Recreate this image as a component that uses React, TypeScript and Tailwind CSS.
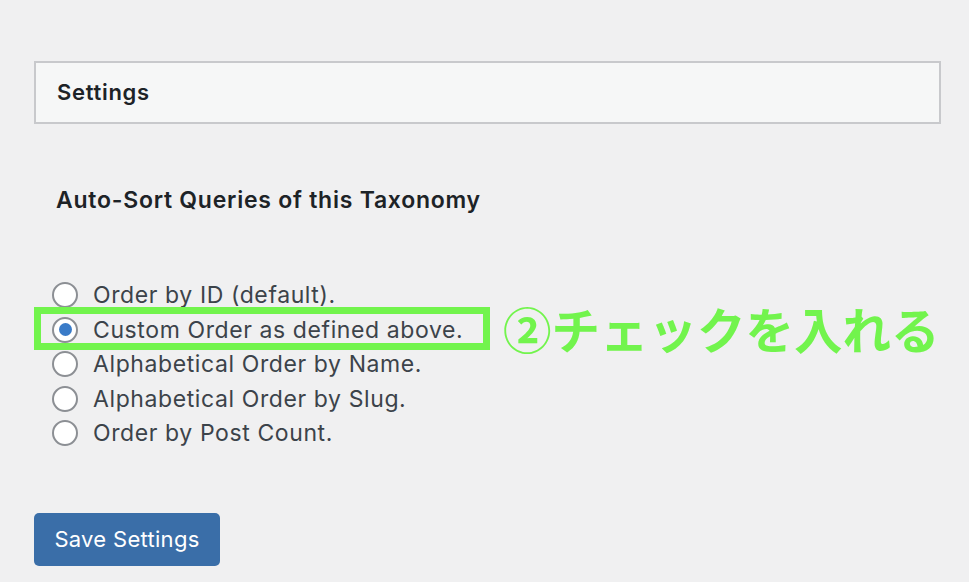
const options = [
  "Order by ID (default).",
  "Custom Order as defined above.",
  "Alphabetical Order by Name.",
  "Alphabetical Order by Slug.",
  "Order by Post Count.",
];

export default function App() {
  return (
    <div className="h-[582px] w-full overflow-hidden bg-[#f0f0f1] pl-[34px] pr-[28px] pt-[61px] font-['Inter','Noto_Sans',sans-serif] text-[#1d2327]">
      <div className="flex h-[63px] items-center border-2 border-[#c8c9cc] bg-[#f6f7f7] px-[21px]">
        <h2 className="text-[22px] font-semibold tracking-[0.7px]">Settings</h2>
      </div>

      <h3 className="mt-[61px] pl-[22px] text-[23px] leading-[30px] font-semibold tracking-[0.75px]">
        Auto-Sort Queries of this Taxonomy
      </h3>

      <div className="relative mt-[63px]">
        {options.map((label, i) => (
          <label key={label} className="flex h-[34.5px] items-center gap-[15px] pl-[18px] text-[23px] tracking-[0.6px] text-[#3c434a]">
            <span className="flex h-[26px] w-[26px] shrink-0 items-center justify-center rounded-full border-2 border-[#8c8f94] bg-white">
              {i === 1 && <span className="h-[13px] w-[13px] rounded-full bg-[#3a7bc8]" />}
            </span>
            <span>{label}</span>
          </label>
        ))}
        <div className="absolute left-0 top-[29px] h-[43px] w-[456px] border-[7px] border-[#72f44d]" />
        <div className="absolute left-[469px] top-[29px] flex h-[43px] items-center font-['Noto_Sans_CJK_JP',sans-serif] text-[48.5px] font-bold leading-none text-[#72f44d]">
          ②チェックを入れる
        </div>
      </div>

      <button className="mt-[62px] h-[53px] w-[186px] rounded-[5px] bg-[#3a6ea8] text-[22px] tracking-[0.3px] text-white">
        Save Settings
      </button>
    </div>
  );
}
